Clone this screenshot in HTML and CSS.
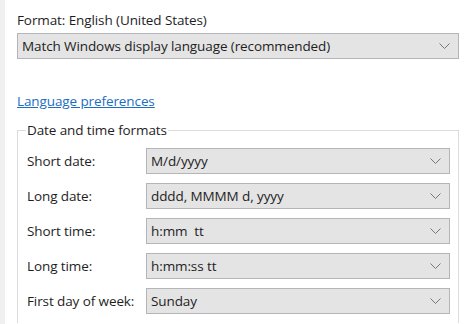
FILE: index.html
```html
<!DOCTYPE html>
<html lang="en">
<head>
  <meta charset="UTF-8">
  <title>Region format</title>
  <link rel="stylesheet" href="styles.css">
</head>
<body>
<div class="page">
  <p class="format-label">Format: English (United States)</p>
  <div class="select wide">
    <span>Match Windows display language (recommended)</span>
    <svg class="chev" width="11" height="6" viewBox="0 0 11 6"><path d="M0.5 0.5 L5.5 5.5 L10.5 0.5" fill="none" stroke="#777" stroke-width="1"/></svg>
  </div>

  <a class="link" href="#">Language preferences</a>

  <fieldset class="group">
    <legend>Date and time formats</legend>
    <div class="row">
      <label>Short date:</label>
      <div class="select">
        <span>M/d/yyyy</span>
        <svg class="chev" width="11" height="6" viewBox="0 0 11 6"><path d="M0.5 0.5 L5.5 5.5 L10.5 0.5" fill="none" stroke="#777" stroke-width="1"/></svg>
      </div>
    </div>
    <div class="row">
      <label>Long date:</label>
      <div class="select">
        <span>dddd, MMMM d, yyyy</span>
        <svg class="chev" width="11" height="6" viewBox="0 0 11 6"><path d="M0.5 0.5 L5.5 5.5 L10.5 0.5" fill="none" stroke="#777" stroke-width="1"/></svg>
      </div>
    </div>
    <div class="row">
      <label>Short time:</label>
      <div class="select">
        <span>h:mm&nbsp; tt</span>
        <svg class="chev" width="11" height="6" viewBox="0 0 11 6"><path d="M0.5 0.5 L5.5 5.5 L10.5 0.5" fill="none" stroke="#777" stroke-width="1"/></svg>
      </div>
    </div>
    <div class="row">
      <label>Long time:</label>
      <div class="select">
        <span>h:mm:ss tt</span>
        <svg class="chev" width="11" height="6" viewBox="0 0 11 6"><path d="M0.5 0.5 L5.5 5.5 L10.5 0.5" fill="none" stroke="#777" stroke-width="1"/></svg>
      </div>
    </div>
    <div class="row">
      <label>First day of week:</label>
      <div class="select">
        <span>Sunday</span>
        <svg class="chev" width="11" height="6" viewBox="0 0 11 6"><path d="M0.5 0.5 L5.5 5.5 L10.5 0.5" fill="none" stroke="#777" stroke-width="1"/></svg>
      </div>
    </div>
  </fieldset>
</div>
</body>
</html>
```

FILE: styles.css
```css
body {
  margin: 0;
  font-family: "Open Sans", "Noto Sans", sans-serif;
  font-size: 13.5px;
  letter-spacing: -0.1px;
  color: #1e1e1e;
  background: #fff;
}

/* left strip + content */
.page {
  border-left: 5px solid #f0f0f0;
  padding: 0 15px 0 12px;
  height: 324px;
  box-sizing: border-box;
}

.format-label {
  margin: 0;
  padding-top: 10px;
  height: 33px;
  line-height: 20px;
  box-sizing: border-box;
}

/* dropdowns */
.select {
  height: 26px;
  box-sizing: border-box;
  border: 1px solid #b3b5b8;
  background: #e4e4e4;
  display: flex;
  align-items: center;
  justify-content: space-between;
  padding: 0 8px 0 4px;
  white-space: nowrap;
}
.select.wide {
  width: 442px;
}
.chev {
  flex: none;
}

.link {
  display: block;
  margin-top: 32px;
  width: max-content;
  color: #1b6ec2;
  text-decoration: underline;
  line-height: 20px;
}

/* date and time group */
.group {
  margin: 10px 0 0 0;
  width: 442px;
  box-sizing: border-box;
  border: 1px solid #dcdcdc;
  border-bottom: none;
  padding: 9px 8px 0 9px;
  min-width: 0;
}
.group legend {
  padding: 0 1px;
  margin-left: -1px;
  line-height: 18px;
}
.row {
  display: flex;
  align-items: center;
  margin-bottom: 9px;
}
.row label {
  width: 119px;
  flex: none;
}
.row .select {
  flex: 1;
}
```
